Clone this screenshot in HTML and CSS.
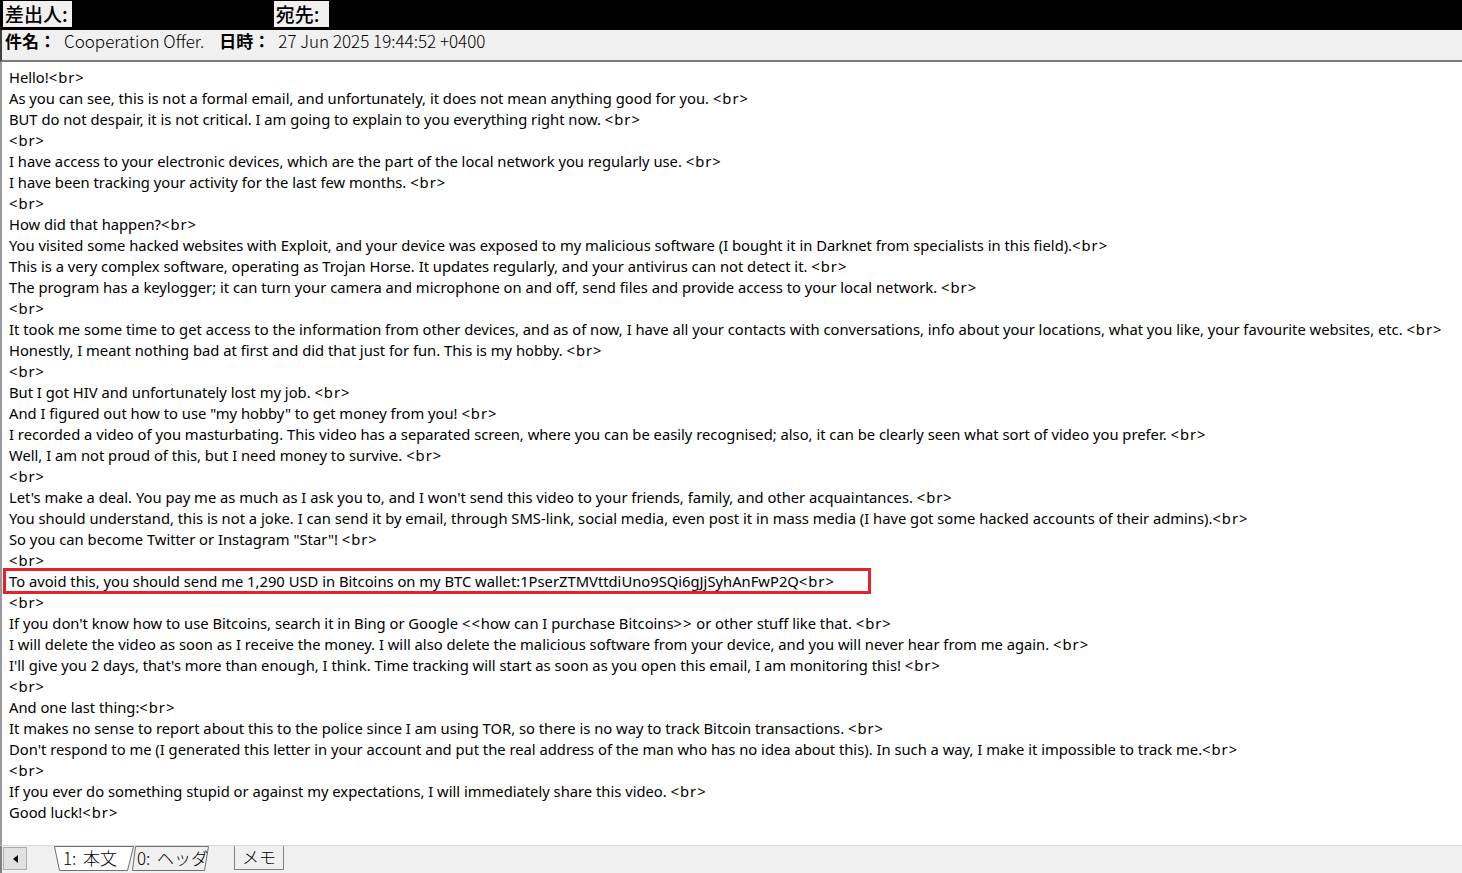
FILE: index.html
```html
<!DOCTYPE html>
<html lang="ja">
<head>
    <meta charset="UTF-8" />
    <meta name="viewport" content="width=device-width, initial-scale=1.0" />
    <title>Cooperation Offer.</title>
    <link rel="stylesheet" href="styles.css">
</head>
<body>
    <div class="viewer">
        <div class="from-row">
            <span class="label">差出人:</span>
            <span class="redact redact-from"></span>
            <span class="label label-to">宛先:</span>
            <span class="redact redact-to"></span>
        </div>
        <div class="subject-row">
            <span class="field-name">件名：</span>
            <span class="field-value subject">Cooperation Offer.</span>
            <span class="field-name">日時：</span>
            <span class="field-value">27 Jun 2025 19:44:52 +0400</span>
        </div>

        <div class="message-body">
            <div class="line">Hello!<span class="tag">&lt;br&gt;</span></div>
            <div class="line">As you can see, this is not a formal email, and unfortunately, it does not mean anything good for you. <span class="tag">&lt;br&gt;</span></div>
            <div class="line">BUT do not despair, it is not critical. I am going to explain to you everything right now. <span class="tag">&lt;br&gt;</span></div>
            <div class="line"><span class="tag">&lt;br&gt;</span></div>
            <div class="line">I have access to your electronic devices, which are the part of the local network you regularly use. <span class="tag">&lt;br&gt;</span></div>
            <div class="line">I have been tracking your activity for the last few months. <span class="tag">&lt;br&gt;</span></div>
            <div class="line"><span class="tag">&lt;br&gt;</span></div>
            <div class="line">How did that happen?<span class="tag">&lt;br&gt;</span></div>
            <div class="line">You visited some hacked websites with Exploit, and your device was exposed to my malicious software (I bought it in Darknet from specialists in this field).<span class="tag">&lt;br&gt;</span></div>
            <div class="line">This is a very complex software, operating as Trojan Horse. It updates regularly, and your antivirus can not detect it. <span class="tag">&lt;br&gt;</span></div>
            <div class="line">The program has a keylogger; it can turn your camera and microphone on and off, send files and provide access to your local network. <span class="tag">&lt;br&gt;</span></div>
            <div class="line"><span class="tag">&lt;br&gt;</span></div>
            <div class="line">It took me some time to get access to the information from other devices, and as of now, I have all your contacts with conversations, info about your locations, what you like, your favourite websites, etc. <span class="tag">&lt;br&gt;</span></div>
            <div class="line">Honestly, I meant nothing bad at first and did that just for fun. This is my hobby. <span class="tag">&lt;br&gt;</span></div>
            <div class="line"><span class="tag">&lt;br&gt;</span></div>
            <div class="line">But I got HIV and unfortunately lost my job. <span class="tag">&lt;br&gt;</span></div>
            <div class="line">And I figured out how to use "my hobby" to get money from you! <span class="tag">&lt;br&gt;</span></div>
            <div class="line">I recorded a video of you masturbating. This video has a separated screen, where you can be easily recognised; also, it can be clearly seen what sort of video you prefer. <span class="tag">&lt;br&gt;</span></div>
            <div class="line">Well, I am not proud of this, but I need money to survive. <span class="tag">&lt;br&gt;</span></div>
            <div class="line"><span class="tag">&lt;br&gt;</span></div>
            <div class="line">Let's make a deal. You pay me as much as I ask you to, and I won't send this video to your friends, family, and other acquaintances. <span class="tag">&lt;br&gt;</span></div>
            <div class="line">You should understand, this is not a joke. I can send it by email, through SMS-link, social media, even post it in mass media (I have got some hacked accounts of their admins).<span class="tag">&lt;br&gt;</span></div>
            <div class="line">So you can become Twitter or Instagram "Star"! <span class="tag">&lt;br&gt;</span></div>
            <div class="line"><span class="tag">&lt;br&gt;</span></div>
            <div class="line highlight">To avoid this, you should send me 1,290 USD in Bitcoins on my BTC wallet:1PserZTMVttdiUno9SQi6gJjSyhAnFwP2Q<span class="tag">&lt;br&gt;</span></div>
            <div class="line"><span class="tag">&lt;br&gt;</span></div>
            <div class="line">If you don't know how to use Bitcoins, search it in Bing or Google <span class="tag">&lt;&lt;</span>how can I purchase Bitcoins<span class="tag">&gt;&gt;</span> or other stuff like that. <span class="tag">&lt;br&gt;</span></div>
            <div class="line">I will delete the video as soon as I receive the money. I will also delete the malicious software from your device, and you will never hear from me again. <span class="tag">&lt;br&gt;</span></div>
            <div class="line">I'll give you 2 days, that's more than enough, I think. Time tracking will start as soon as you open this email, I am monitoring this! <span class="tag">&lt;br&gt;</span></div>
            <div class="line"><span class="tag">&lt;br&gt;</span></div>
            <div class="line">And one last thing:<span class="tag">&lt;br&gt;</span></div>
            <div class="line">It makes no sense to report about this to the police since I am using TOR, so there is no way to track Bitcoin transactions. <span class="tag">&lt;br&gt;</span></div>
            <div class="line">Don't respond to me (I generated this letter in your account and put the real address of the man who has no idea about this). In such a way, I make it impossible to track me.<span class="tag">&lt;br&gt;</span></div>
            <div class="line"><span class="tag">&lt;br&gt;</span></div>
            <div class="line">If you ever do something stupid or against my expectations, I will immediately share this video. <span class="tag">&lt;br&gt;</span></div>
            <div class="line">Good luck!<span class="tag">&lt;br&gt;</span></div>
        </div>

        <div class="tab-bar">
            <div class="scroll-button"><span class="arrow-left"></span></div>
            <div class="tabs">
                <div class="tab tab-header">
                    <svg class="tab-shape" width="84" height="27" viewBox="0 0 84 27">
                        <polygon points="7.5,0.5 4.5,24.5 76.5,24.5 80.5,0.5" fill="#f0f0f0" stroke="#707070" stroke-width="1"/>
                    </svg>
                    <span class="tab-text">0: ヘッダ</span>
                </div>
                <div class="tab tab-body active">
                    <svg class="tab-shape" width="80" height="27" viewBox="0 0 80 27">
                        <polygon points="0.5,0.5 5.5,24.5 73.5,24.5 79.5,0.5" fill="#ffffff" stroke="#707070" stroke-width="1"/>
                    </svg>
                    <span class="tab-text">1: 本文</span>
                </div>
            </div>
            <div class="memo">メモ</div>
        </div>
    </div>
</body>
</html>
```

FILE: styles.css
```css
body {
    margin: 0;
    padding: 0;
    background: #ffffff;
    overflow: hidden;
}

.viewer {
    width: 1462px;
    height: 873px;
    display: flex;
    flex-direction: column;
}

.from-row {
    display: flex;
    height: 30px;
    flex: none;
    background: #000000;
    padding-left: 3px;
    font-family: "Noto Sans CJK JP", sans-serif;
}

.label {
    height: 26px;
    margin-top: 1px;
    background: #f0f0f0;
    color: #000000;
    font-size: 19px;
    font-weight: 500;
    line-height: 26px;
    padding: 0 4px 0 2px;
}

.label-to {
    padding-right: 10px;
}

.redact-from {
    width: 202px;
}

.redact-to {
    flex: 1;
}

.subject-row {
    display: flex;
    align-items: flex-start;
    height: 32px;
    box-sizing: border-box;
    padding: 1px 0 0 3px;
    background: #f0f0f0;
    border-left: 2px solid #404040;
    border-bottom: 2px solid #7a7a7a;
    font-family: "Noto Sans CJK JP", sans-serif;
    font-size: 17px;
    line-height: 20px;
    color: #000000;
    flex: none;
}

.field-name {
    font-weight: bold;
    margin-right: 8px;
}

.field-value {
    font-weight: 300;
}

.subject {
    margin-right: 15px;
}

.message-body {
    flex: 1;
    border-left: 2px solid #9a9a9a;
    border-bottom: 1px solid #dcdcdc;
    padding: 5px 0 0 7px;
    font-family: "Noto Sans", sans-serif;
    font-size: 14.75px;
    line-height: 21px;
    color: #000000;
    white-space: nowrap;
    overflow: hidden;
}

.tag {
    letter-spacing: 1px;
}

.highlight {
    position: relative;
}

    .highlight::after {
        content: "";
        position: absolute;
        left: -6px;
        top: -3px;
        width: 868px;
        height: 26px;
        border: 3px solid #e8202a;
        box-sizing: border-box;
    }

.tab-bar {
    display: flex;
    height: 27px;
    flex: none;
    background: #f0f0f0;
    border-left: 2px solid #808080;
    font-family: "Noto Sans CJK JP", sans-serif;
    font-size: 17px;
    font-weight: 300;
    color: #000000;
}

.scroll-button {
    display: flex;
    align-items: center;
    justify-content: center;
    width: 22px;
    height: 21px;
    margin: 1px 0 0 1px;
    background: #e1e1e1;
    border: 1px solid #adadad;
}

.arrow-left {
    width: 0;
    height: 0;
    border-top: 4px solid transparent;
    border-bottom: 4px solid transparent;
    border-right: 5px solid #000000;
}

.tabs {
    position: relative;
    width: 160px;
    margin-left: 27px;
}

.tab {
    position: absolute;
    top: 0;
    height: 27px;
}

.tab-shape {
    position: absolute;
    left: 0;
    top: 0;
}

.tab-text {
    position: relative;
    display: block;
    line-height: 24px;
    padding-left: 9px;
    word-spacing: 3px;
}

.tab-body {
    left: 0;
    width: 80px;
}

.tab-header {
    left: 74px;
    width: 84px;
}

.memo {
    height: 23px;
    line-height: 22px;
    margin-left: 20px;
    padding: 0 7px;
    border: 1px solid #808080;
    border-top: none;
}
```
